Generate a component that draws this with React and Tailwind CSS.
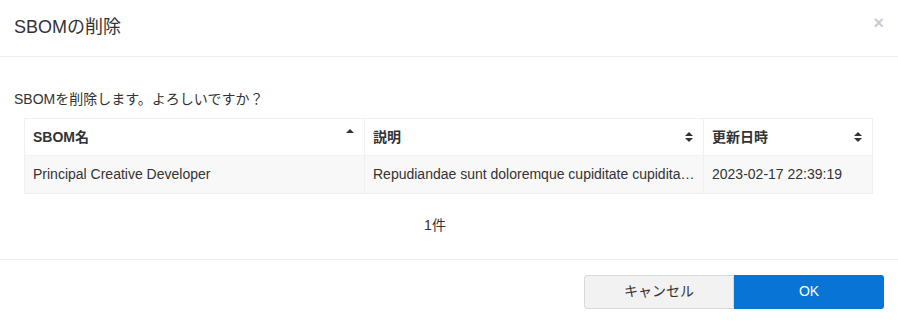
const rows = [
  {
    name: 'Principal Creative Developer',
    description: 'Repudiandae sunt doloremque cupiditate cupiditate quia sed voluptatem',
    updatedAt: '2023-02-17 22:39:19',
  },
];

const SortIcon = ({ dir }) => (
  <svg width="8" height="12" viewBox="0 0 8 12" className="shrink-0">
    {dir !== 'desc' && <path d="M0 5 L4 1 L8 5 Z" fill="#333" />}
    {dir !== 'asc' && <path d="M0 7 L4 11 L8 7 Z" fill="#333" />}
  </svg>
);

const App = () => {
  return (
    <div
      className="w-[898px] h-[324px] bg-white text-[#333] flex flex-col"
      style={{ fontFamily: '"Liberation Sans", Arial, "Noto Sans CJK JP", sans-serif' }}
    >
      <div className="h-[57px] shrink-0 flex items-center justify-between pl-[14px] pr-[14px] border-b border-[#eeeeee]">
        <h2 className="text-[18px] leading-none pb-[2px]">SBOMの削除</h2>
        <span className="text-[#cccccc] text-[18px] font-bold leading-none -mt-[10px]">×</span>
      </div>

      <div className="flex-1 flex flex-col px-[14px] pt-[35px]">
        <p className="text-[14px] leading-none">SBOMを削除します。よろしいですか？</p>

        <table className="ml-[10px] mt-[12px] w-[849px] border border-[#f0f0f0] border-collapse text-[14px] table-fixed">
          <thead>
            <tr className="h-[37px] bg-white">
              <th className="w-[340px] border-r border-[#f0f0f0] text-left font-bold pl-[8px] pr-[10px]">
                <div className="flex items-center justify-between">
                  <span>SBOM名</span>
                  <span className="-mt-[7px]"><SortIcon dir="asc" /></span>
                </div>
              </th>
              <th className="w-[339px] border-r border-[#f0f0f0] text-left font-bold pl-[8px] pr-[10px]">
                <div className="flex items-center justify-between">
                  <span>説明</span>
                  <SortIcon />
                </div>
              </th>
              <th className="text-left font-bold pl-[8px] pr-[10px]">
                <div className="flex items-center justify-between">
                  <span>更新日時</span>
                  <SortIcon />
                </div>
              </th>
            </tr>
          </thead>
          <tbody>
            {rows.map((row, i) => (
              <tr key={i} className="h-[38px] bg-[#f8f8f8] border-t border-[#f0f0f0]">
                <td className="border-r border-[#f0f0f0] pl-[8px] pr-[8px]">
                  <div className="truncate">{row.name}</div>
                </td>
                <td className="border-r border-[#f0f0f0] pl-[8px] pr-[8px]">
                  <div className="truncate">{row.description}</div>
                </td>
                <td className="pl-[8px] pr-[8px]">
                  <div className="truncate">{row.updatedAt}</div>
                </td>
              </tr>
            ))}
          </tbody>
        </table>

        <div className="mt-[24px] pr-[28px] text-center text-[14px] leading-none">1件</div>
      </div>

      <div className="h-[65px] shrink-0 border-t border-[#eeeeee] flex items-center justify-end pr-[14px] pb-[1px]">
        <button className="w-[150px] h-[34px] bg-[#f2f2f2] border border-[#d9d9d9] rounded-l-[3px] text-[14px] text-[#333]">
          キャンセル
        </button>
        <button className="w-[150px] h-[34px] bg-[#0774d6] rounded-r-[3px] text-[14px] text-white">
          OK
        </button>
      </div>
    </div>
  );
};

export default App;
